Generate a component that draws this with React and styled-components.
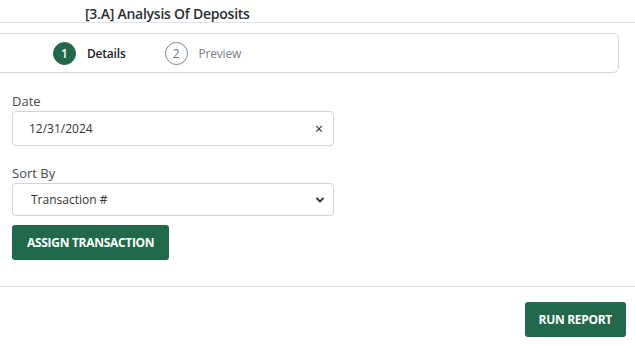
import React from "react";
import styled, { createGlobalStyle } from "styled-components";

const GlobalStyle = createGlobalStyle`
  html, body {
    margin: 0;
    padding: 0;
    background: #ffffff;
    font-family: "Open Sans", "Noto Sans", sans-serif;
    color: #212529;
    overflow: hidden;
  }
  * { box-sizing: border-box; }
`;

const Page = styled.div`
  width: 635px;
  height: 346px;
  display: flex;
  flex-direction: column;
`;

const Header = styled.div`
  height: 23px;
  padding-left: 85px;
  border-bottom: 1px solid #e1e4e7;
  display: flex;
  align-items: flex-end;
`;

const Title = styled.h1`
  margin: 0 0 -1px;
  font-size: 14px;
  font-weight: 600;
  letter-spacing: -0.25px;
  color: #2b2f33;
  line-height: 18px;
`;

const Stepper = styled.div`
  margin: 10px 16px 0 -8px;
  height: 40px;
  border: 1px solid #cfd9e2;
  border-radius: 6px;
  display: flex;
  align-items: center;
  padding-left: 60px;
  gap: 39px;
`;

const Step = styled.div`
  display: flex;
  align-items: center;
  gap: 11px;
`;

const StepCircle = styled.span`
  width: 23px;
  height: 23px;
  border-radius: 50%;
  display: flex;
  align-items: center;
  justify-content: center;
  font-size: 12px;
  background: ${(p) => (p.$active ? "#22684a" : "#fff")};
  color: ${(p) => (p.$active ? "#fff" : "#6c757d")};
  border: 1px solid ${(p) => (p.$active ? "#22684a" : "#7d8489")};
  font-weight: ${(p) => (p.$active ? 600 : 400)};
`;

const StepLabel = styled.span`
  font-size: 12px;
  letter-spacing: -0.2px;
  font-weight: ${(p) => (p.$active ? 600 : 400)};
  color: ${(p) => (p.$active ? "#222" : "#7a8086")};
`;

const Form = styled.div`
  padding: 20px 12px 0;
  width: 346px;
  display: flex;
  flex-direction: column;
`;

const Field = styled.div`
  display: flex;
  flex-direction: column;
  margin-bottom: ${(p) => p.$mb || 0}px;
`;

const Label = styled.label`
  font-size: 13px;
  color: #444a50;
  line-height: 17px;
  margin-bottom: 1px;
`;

const InputBox = styled.div`
  height: ${(p) => p.$h}px;
  border: 1px solid #ced4da;
  border-radius: 4px;
  display: flex;
  align-items: center;
  justify-content: space-between;
  padding: 0 8px 0 ${(p) => p.$pl}px;
  font-size: 12px;
  color: #333;
`;

const Clear = styled.span`
  font-size: 14px;
  color: #222;
  margin-right: 2px;
`;

const Button = styled.button`
  height: 35px;
  border: none;
  border-radius: 3px;
  background: #22684a;
  color: #fff;
  font-family: inherit;
  font-size: 12px;
  font-weight: 700;
  letter-spacing: -0.3px;
  padding: 0 ${(p) => p.$px || 14}px;
  cursor: pointer;
`;

const AssignRow = styled.div`
  display: flex;
`;

const Divider = styled.div`
  margin-top: 26px;
  border-top: 1px solid #dfe2e5;
`;

const Footer = styled.div`
  display: flex;
  justify-content: flex-end;
  padding: 15px 9px 0 0;
`;

export default function App() {
  return (
    <Page>
      <GlobalStyle />
      <Header>
        <Title>[3.A] Analysis Of Deposits</Title>
      </Header>
      <Stepper>
        <Step>
          <StepCircle $active>1</StepCircle>
          <StepLabel $active>Details</StepLabel>
        </Step>
        <Step>
          <StepCircle>2</StepCircle>
          <StepLabel>Preview</StepLabel>
        </Step>
      </Stepper>
      <Form>
        <Field $mb={19}>
          <Label>Date</Label>
          <InputBox $h={35} $pl={16}>
            <span>12/31/2024</span>
            <Clear>×</Clear>
          </InputBox>
        </Field>
        <Field $mb={9}>
          <Label>Sort By</Label>
          <InputBox $h={33} $pl={18}>
            <span>Transaction #</span>
            <svg width="10" height="8" viewBox="0 0 10 8">
              <path d="M1.5 2 L5 5.5 L8.5 2" fill="none" stroke="#333" strokeWidth="1.8" />
            </svg>
          </InputBox>
        </Field>
        <AssignRow>
          <Button $px={15}>ASSIGN TRANSACTION</Button>
        </AssignRow>
      </Form>
      <Divider />
      <Footer>
        <Button>RUN REPORT</Button>
      </Footer>
    </Page>
  );
}
